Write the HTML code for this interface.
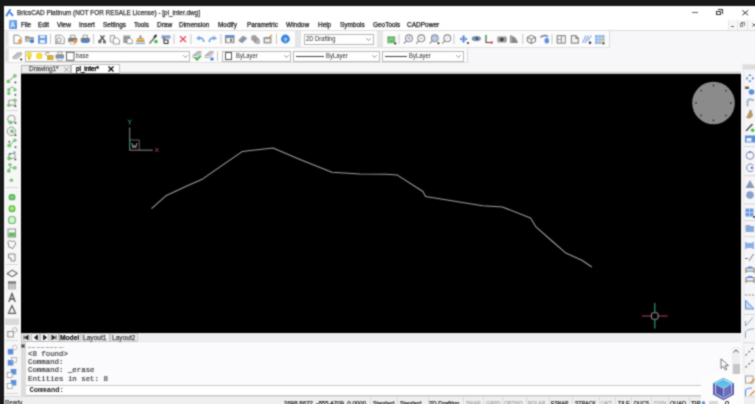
<!DOCTYPE html>
<html><head><meta charset="utf-8">
<style>
*{margin:0;padding:0;box-sizing:border-box}
html,body{width:755px;height:404px;overflow:hidden;background:#181818;font-family:"Liberation Sans",sans-serif;color:#222;position:relative}
.a{position:absolute}
.t{position:absolute;font-size:7px;line-height:8px;white-space:nowrap;letter-spacing:0;color:#1a1a1a;transform-origin:0 0;-webkit-text-stroke:0.25px currentColor}
.mono{font-family:"Liberation Mono",monospace}
svg{position:absolute;overflow:visible}
#root{position:absolute;left:0;top:0;width:755px;height:404px;overflow:hidden;background:#181818;filter:url(#bl)}
</style></head><body><svg width="0" height="0" style="position:absolute"><filter id="bl" x="0" y="0" width="100%" height="100%" color-interpolation-filters="sRGB"><feConvolveMatrix order="3" kernelMatrix="1 2 1 2 8 2 1 2 1" edgeMode="duplicate"/></filter></svg><div id="root">
<!-- window background -->
<div class="a" style="left:4px;top:6px;width:751px;height:398px;background:#f7f6f9"></div>
<!-- title + menu white -->
<div class="a" style="left:4px;top:6px;width:751px;height:24px;background:#fff"></div>

<!-- toolbar rows -->
<div class="a" style="left:4px;top:30px;width:751px;height:1px;background:#dedede"></div>

<!-- drawing area -->
<div class="a" style="left:21px;top:71px;width:720px;height:4px;background:linear-gradient(#f8f8f8,#9a9a9a)"></div>
<div class="a" style="left:21px;top:74px;width:720px;height:259px;background:#000"></div>
<!-- tab row -->
<div class="a" style="left:20.5px;top:64.5px;width:50px;height:9px;background:#ececec;border:1px solid #b8b8b8;border-bottom:1px solid #888"></div>
<div class="a" style="left:70.5px;top:64px;width:49.5px;height:9.5px;background:#fff;border:1px solid #c0c0c0;border-bottom:1px solid #777"></div>

<!-- left toolbar -->
<div class="a" style="left:4px;top:74px;width:17px;height:322px;background:#f7f7f8"></div>

<!-- drawing area -->

<!-- right toolbar -->
<div class="a" style="left:741px;top:63px;width:14px;height:341px;background:#f6f6f8"></div>

<!-- layout tab row -->
<div class="a" style="left:21px;top:333px;width:720px;height:9px;background:#efeff1;border-bottom:1px solid #e8e8e8"></div>

<!-- command panel -->
<div class="a" style="left:21px;top:342px;width:720px;height:54px;background:#fbfafc"></div>
<div class="a" style="left:21px;top:342px;width:5px;height:54px;background:#dcdcdc"></div>
<div class="a" style="left:26px;top:385px;width:715px;height:11px;background:#fff;border-top:1px solid #c9c9c9;border-bottom:1px solid #c9c9c9"></div>

<!-- status bar -->
<div class="a" style="left:4px;top:396px;width:751px;height:8px;background:#efefef;border-top:1px solid #dadada"></div>


<!-- ===== title ===== -->
<svg style="left:0;top:0" width="20" height="20" viewBox="0 0 20 20"><path d="M6.6 15.6 L10 9.9" stroke="#3f7fe0" stroke-width="1.9" stroke-linecap="round"/><path d="M10.2 12.6 L12.6 15.4" stroke="#3f7fe0" stroke-width="1.8" stroke-linecap="round"/></svg>
<div class="t" style="left:16.5px;top:9px;color:#333;transform:scaleX(0.912)">BricsCAD Platinum (NOT FOR RESALE License) - [pl_inter.dwg]</div>
<!-- window controls -->
<div class="a" style="left:692px;top:12px;width:5.6px;height:1px;background:#666"></div>
<div class="a" style="left:716.3px;top:10.6px;width:5px;height:4.5px;border:1px solid #333"></div>
<div class="a" style="left:717.6px;top:9.3px;width:5px;height:4.5px;border-top:1px solid #333;border-right:1px solid #333"></div>
<svg style="left:741.5px;top:9.5px" width="6.5" height="5.5" viewBox="0 0 6.5 5.5"><path d="M0.3 0.3 L6.2 5.2 M6.2 0.3 L0.3 5.2" stroke="#333" stroke-width="1"/></svg>
<!-- ===== menu ===== -->
<div class="a" style="left:9px;top:20px;width:7.6px;height:8.8px;background:linear-gradient(135deg,#8ab8f0,#4a86dc);border-radius:1px"></div>
<svg style="left:9px;top:20px" width="8" height="9" viewBox="0 0 8 9"><path d="M2 7.5 L3.8 2 L5.6 7.5 M2.7 5.6 H4.9" stroke="#fff" stroke-width="0.9" fill="none"/></svg>
<div class="t" style="left:20.7px;top:21px;transform:scaleX(0.895)">File</div>
<div class="t" style="left:38px;top:21px;transform:scaleX(0.902)">Edit</div>
<div class="t" style="left:57px;top:21px;transform:scaleX(0.921)">View</div>
<div class="t" style="left:78.6px;top:21px;transform:scaleX(0.897)">Insert</div>
<div class="t" style="left:103px;top:21px;transform:scaleX(0.905)">Settings</div>
<div class="t" style="left:133.8px;top:21px;transform:scaleX(0.908)">Tools</div>
<div class="t" style="left:156.7px;top:21px;transform:scaleX(0.926)">Draw</div>
<div class="t" style="left:179px;top:21px;transform:scaleX(0.918)">Dimension</div>
<div class="t" style="left:218px;top:21px;transform:scaleX(0.913)">Modify</div>
<div class="t" style="left:246.6px;top:21px;transform:scaleX(0.911)">Parametric</div>
<div class="t" style="left:286.4px;top:21px;transform:scaleX(0.928)">Window</div>
<div class="t" style="left:318px;top:21px;transform:scaleX(0.916)">Help</div>
<div class="t" style="left:340px;top:21px;transform:scaleX(0.922)">Symbols</div>
<div class="t" style="left:372.5px;top:21px;transform:scaleX(0.919)">GeoTools</div>
<div class="t" style="left:407.4px;top:21px;transform:scaleX(0.931)">CADPower</div>
<!-- mdi buttons -->
<div class="a" style="left:728px;top:19.5px;width:27px;height:10px;background:#f7f7f7;border-left:1px solid #e6e6e6"></div>
<div class="a" style="left:736.5px;top:19.5px;width:1px;height:10px;background:#e6e6e6"></div>
<div class="a" style="left:747px;top:19.5px;width:1px;height:10px;background:#e6e6e6"></div>
<div class="a" style="left:730.5px;top:26.2px;width:3px;height:1px;background:#666"></div>
<div class="a" style="left:739.8px;top:23px;width:3.5px;height:3.5px;border:0.8px solid #888"></div>
<div class="a" style="left:741px;top:22px;width:3.5px;height:3.5px;border-top:0.8px solid #888;border-right:0.8px solid #888"></div>
<svg style="left:751.5px;top:22.5px" width="4" height="4" viewBox="0 0 4 4"><path d="M0.3 0.3 L3.7 3.7 M3.7 0.3 L0.3 3.7" stroke="#666" stroke-width="0.9"/></svg>
<!-- ===== toolbar row 1 ===== -->
<div class="a" style="left:5px;top:31px;width:290px;height:17px;background:#fcfcfd;border-bottom:1px solid #e2e2e2"></div>
<div class="a" style="left:295px;top:31px;width:6px;height:17px;background:#e6e6e8"></div>
<div class="a" style="left:301px;top:31px;width:76px;height:17px;background:#fcfcfd;border-bottom:1px solid #e2e2e2"></div>
<div class="a" style="left:377px;top:31px;width:6px;height:17px;background:#e6e6e8"></div>
<div class="a" style="left:383px;top:31px;width:227px;height:17px;background:#fcfcfd;border-right:1px solid #dcdcdc;border-bottom:1px solid #e2e2e2"></div>
<div class="a" style="left:5px;top:31px;width:4px;height:17px;background:#ececee"></div>
<!-- workspace combo -->
<div class="a" style="left:303.5px;top:33.5px;width:70px;height:11px;background:#fff;border:1px solid #b9b9b9"></div>
<div class="t" style="left:306px;top:35px;font-size:6.5px;color:#333;transform:scaleX(0.900);-webkit-text-stroke:0;color:#2a2a2a">2D Drafting</div>
<svg style="left:366px;top:38px" width="5" height="3" viewBox="0 0 5 3"><path d="M0.3 0.3 L2.5 2.5 L4.7 0.3" stroke="#777" stroke-width="0.8" fill="none"/></svg>

<!-- ===== toolbar row 2 ===== -->
<div class="a" style="left:5px;top:49px;width:463px;height:14px;background:#fcfcfd;border-right:1px solid #dadada;border-bottom:1px solid #e2e2e2"></div>
<div class="a" style="left:5px;top:48px;width:4px;height:15px;background:#e6e6e6"></div>
<!-- layer combo -->
<div class="a" style="left:24.5px;top:50.5px;width:165px;height:11px;background:#fff;border:1px solid #b9b9b9"></div>
<div class="t" style="left:76px;top:52px;font-size:6.5px;color:#333;transform:scaleX(0.915);-webkit-text-stroke:0;color:#2a2a2a">base</div>
<svg style="left:183px;top:55px" width="5" height="3" viewBox="0 0 5 3"><path d="M0.3 0.3 L2.5 2.5 L4.7 0.3" stroke="#777" stroke-width="0.8" fill="none"/></svg>
<!-- color combo -->
<div class="a" style="left:222px;top:50.5px;width:69px;height:11px;background:#fff;border:1px solid #b9b9b9"></div>
<div class="a" style="left:225px;top:52px;width:7px;height:8px;background:#fff;border:1px solid #555"></div>
<div class="t" style="left:236px;top:52px;font-size:6.5px;color:#333;transform:scaleX(0.912);-webkit-text-stroke:0;color:#2a2a2a">ByLayer</div>
<svg style="left:284px;top:55px" width="5" height="3" viewBox="0 0 5 3"><path d="M0.3 0.3 L2.5 2.5 L4.7 0.3" stroke="#777" stroke-width="0.8" fill="none"/></svg>
<!-- linetype combo -->
<div class="a" style="left:292.5px;top:50.5px;width:87px;height:11px;background:#fff;border:1px solid #b9b9b9"></div>
<div class="a" style="left:296px;top:55.5px;width:28px;height:1px;background:#444"></div>
<div class="t" style="left:326px;top:52px;font-size:6.5px;color:#333;transform:scaleX(0.912);-webkit-text-stroke:0;color:#2a2a2a">ByLayer</div>
<svg style="left:372px;top:55px" width="5" height="3" viewBox="0 0 5 3"><path d="M0.3 0.3 L2.5 2.5 L4.7 0.3" stroke="#777" stroke-width="0.8" fill="none"/></svg>
<!-- lineweight combo -->
<div class="a" style="left:381.5px;top:50.5px;width:82px;height:11px;background:#fff;border:1px solid #b9b9b9"></div>
<div class="a" style="left:385px;top:55.5px;width:22px;height:1px;background:#444"></div>
<div class="t" style="left:409px;top:52px;font-size:6.5px;color:#333;transform:scaleX(0.912);-webkit-text-stroke:0;color:#2a2a2a">ByLayer</div>
<svg style="left:456px;top:55px" width="5" height="3" viewBox="0 0 5 3"><path d="M0.3 0.3 L2.5 2.5 L4.7 0.3" stroke="#777" stroke-width="0.8" fill="none"/></svg>

<!-- ===== document tabs ===== -->
<div class="t" style="left:28.5px;top:65px;color:#555;transform:scaleX(0.916)">Drawing1*</div>
<svg style="left:64.2px;top:66.5px" width="5" height="5" viewBox="0 0 5 5"><path d="M0.3 0.3 L4.7 4.7 M4.7 0.3 L0.3 4.7" stroke="#888" stroke-width="0.8"/></svg>
<div class="t" style="left:76px;top:65px;color:#111;text-shadow:0 0 0.3px #000;transform:scaleX(0.895)">pl_inter*</div>
<svg style="left:107.8px;top:66px" width="6" height="6" viewBox="0 0 6 6"><path d="M0.5 0.5 L5.5 5.5 M5.5 0.5 L0.5 5.5" stroke="#111" stroke-width="1.4"/></svg>

<!-- ===== layout tabs ===== -->
<div class="a" style="left:21px;top:333px;width:9px;height:9px;background:#f4f4f4;border:1px solid #bdbdbd"></div>
<div class="a" style="left:31px;top:333px;width:9px;height:9px;background:#f4f4f4;border:1px solid #bdbdbd"></div>
<div class="a" style="left:40px;top:333px;width:9px;height:9px;background:#f4f4f4;border:1px solid #bdbdbd"></div>
<div class="a" style="left:49.5px;top:333px;width:9px;height:9px;background:#f4f4f4;border:1px solid #bdbdbd"></div>
<svg style="left:21px;top:333px" width="40" height="9" viewBox="0 0 40 9">
 <path d="M3 2.2 V6.8 M7 2.2 L3.8 4.5 L7 6.8Z M16.5 2.2 L13.3 4.5 L16.5 6.8Z M22.5 2.2 L25.7 4.5 L22.5 6.8Z M31 2.2 L34.2 4.5 L31 6.8Z M35 2.2 V6.8" stroke="#222" stroke-width="0.9" fill="#222"/>
</svg>
<div class="a" style="left:58.5px;top:333px;width:22px;height:9px;background:#fff;border:1px solid #bdbdbd"></div>
<div class="t" style="left:60px;top:334px;font-weight:bold;color:#111;transform:scaleX(0.951)">Model</div>
<div class="a" style="left:81.5px;top:333px;width:28px;height:9px;background:#f0f0f0;border:1px solid #c4c4c4"></div>
<div class="t" style="left:83px;top:334px;color:#444;transform:scaleX(0.944)">Layout1</div>
<div class="a" style="left:110px;top:333px;width:28px;height:9px;background:#f0f0f0;border:1px solid #c4c4c4"></div>
<div class="t" style="left:112px;top:334px;color:#444;transform:scaleX(0.944)">Layout2</div>

<!-- ===== command panel text ===== -->
<svg style="left:21px;top:343.5px" width="4" height="4" viewBox="0 0 4 4"><rect x="0.3" y="0.3" width="3.4" height="3.4" fill="#777"/><path d="M0.5 0.5 L3.5 3.5 M3.5 0.5 L0.5 3.5" stroke="#333" stroke-width="0.8"/></svg>
<div class="a" style="left:28px;top:347px;width:36px;height:1px;background:repeating-linear-gradient(90deg,#aaa 0 3px,#eee 3px 4.4px)"></div>
<div class="mono a" style="left:28px;top:349.9px;font-size:7.4px;line-height:8.23px;color:#404040;white-space:pre;-webkit-text-stroke:0.2px #404040">&lt;8 found&gt;
Command:
Command: _erase
Entities in set: 8</div>
<div class="mono a" style="left:29.4px;top:386.3px;font-size:7.2px;line-height:8px;color:#222;font-weight:bold;transform:scaleY(1.12);transform-origin:0 50%">Command:</div>
<!-- scrollbar -->
<div class="a" style="left:732px;top:347px;width:8px;height:35px;background:#efefef"></div>
<svg style="left:733px;top:349px" width="6" height="4" viewBox="0 0 6 4"><path d="M0.5 3.5 L3 1 L5.5 3.5" stroke="#555" stroke-width="1" fill="none"/></svg>
<div class="a" style="left:732.5px;top:363.5px;width:7px;height:10px;background:#c6c6c6"></div>
<svg style="left:733px;top:376px" width="6" height="4" viewBox="0 0 6 4"><path d="M0.5 0.5 L3 3 L5.5 0.5" stroke="#bbb" stroke-width="1" fill="none"/></svg>

<!-- status dividers -->
<div class="a" style="left:369.5px;top:397px;width:1px;height:7px;background:#dadada"></div><div class="a" style="left:397px;top:397px;width:1px;height:7px;background:#dadada"></div><div class="a" style="left:427.5px;top:397px;width:1px;height:7px;background:#dadada"></div><div class="a" style="left:463px;top:397px;width:1px;height:7px;background:#dadada"></div><div class="a" style="left:483px;top:397px;width:1px;height:7px;background:#dadada"></div><div class="a" style="left:502px;top:397px;width:1px;height:7px;background:#dadada"></div><div class="a" style="left:525.5px;top:397px;width:1px;height:7px;background:#dadada"></div><div class="a" style="left:548.5px;top:397px;width:1px;height:7px;background:#dadada"></div><div class="a" style="left:572px;top:397px;width:1px;height:7px;background:#dadada"></div><div class="a" style="left:598.5px;top:397px;width:1px;height:7px;background:#dadada"></div><div class="a" style="left:614.8px;top:397px;width:1px;height:7px;background:#dadada"></div><div class="a" style="left:631px;top:397px;width:1px;height:7px;background:#dadada"></div><div class="a" style="left:651.3px;top:397px;width:1px;height:7px;background:#dadada"></div><div class="a" style="left:668px;top:397px;width:1px;height:7px;background:#dadada"></div><div class="a" style="left:688.7px;top:397px;width:1px;height:7px;background:#dadada"></div>
<!-- ===== status bar text ===== -->
<div class="t" style="left:4.5px;top:399px;color:#444;font-size:6.5px;transform:scaleX(0.920)">Ready</div>
<div class="t" style="left:284px;top:398.5px;font-size:6.2px;color:#333;transform:scaleX(0.990)">2698.8672, -855.4709, 0.0000</div>
<div class="t" style="left:373px;top:398.5px;font-size:6.2px;color:#333;transform:scaleX(0.853)">Standard</div>
<div class="t" style="left:399.7px;top:398.5px;font-size:6.2px;color:#333;transform:scaleX(0.853)">Standard</div>
<div class="t" style="left:429.4px;top:398.5px;font-size:6.2px;color:#333;transform:scaleX(0.972)">2D Drafting</div>
<div class="t" style="left:466px;top:398.5px;font-size:6.2px;color:#aaa;transform:scaleX(0.867)">SNAP</div>
<div class="t" style="left:485.8px;top:398.5px;font-size:6.2px;color:#aaa;transform:scaleX(0.938)">GRID</div>
<div class="t" style="left:504.4px;top:398.5px;font-size:6.2px;color:#aaa;transform:scaleX(0.836)">ORTHO</div>
<div class="t" style="left:528px;top:398.5px;font-size:6.2px;color:#aaa;transform:scaleX(0.831)">POLAR</div>
<div class="t" style="left:550.7px;top:398.5px;font-size:6.2px;color:#333;transform:scaleX(0.826)">ESNAP</div>
<div class="t" style="left:575px;top:398.5px;font-size:6.2px;color:#333;transform:scaleX(0.838)">STRACK</div>
<div class="t" style="left:601px;top:398.5px;font-size:6.2px;color:#aaa;transform:scaleX(0.871)">LWT</div>
<div class="t" style="left:618px;top:398.5px;font-size:6.2px;color:#333;transform:scaleX(0.896)">TILE</div>
<div class="t" style="left:634px;top:398.5px;font-size:6.2px;color:#333;transform:scaleX(0.856)">DUCS</div>
<div class="t" style="left:653.5px;top:398.5px;font-size:6.2px;color:#aaa;transform:scaleX(0.933)">DYN</div>
<div class="t" style="left:670px;top:398.5px;font-size:6.2px;color:#333;transform:scaleX(0.894)">QUAD</div>
<div class="t" style="left:691.4px;top:398.5px;font-size:6.2px;color:#333;transform:scaleX(1.017)">TIPS</div>


<!-- ===== drawing content ===== -->
<svg style="left:0;top:0" width="755" height="404" viewBox="0 0 755 404">
 <polyline points="151.5,208.7 166.4,195.4 187.9,185.5 202.8,178.9 216,169.6 242.5,151.4 273,148 298.8,159 331.9,172.3 360,173.9 386.5,174.2 397,174.9 422.9,191.5 425.6,196.4 482.5,205.7 502.4,207 530.5,218 536.2,227.2 552,241 565.3,252.7 581.9,260.3 591.8,267" fill="none" stroke="#a0a0a0" stroke-width="1.05" stroke-linejoin="round"/>
 <!-- UCS -->
 <path d="M129.7 127.5 V150.2 H152.8" stroke="#8c8c8c" stroke-width="1" fill="none"/>
 <path d="M129.5 140 H139.2 V150.2" stroke="#7a7a7a" stroke-width="0.8" fill="none"/>
 <path d="M129.6 140 V150.2" stroke="#2f8f6f" stroke-width="1.1"/>
 <path d="M130 150.2 H139" stroke="#8a3a4a" stroke-width="1"/>
 <path d="M131.8 143 L133.2 148 L134.4 145 L135.6 148 L137 143" stroke="#c8c8c8" stroke-width="0.8" fill="none"/>
 <path d="M127.8 119.6 L129.7 122 L131.6 119.6 M129.7 122 V124.5" stroke="#2a9a7a" stroke-width="0.9" fill="none"/>
 <path d="M155 148 L158.5 152 M158.5 148 L155 152" stroke="#a04058" stroke-width="0.9" fill="none"/>
 <!-- crosshair -->
 <path d="M654.8 303 V312.5 M654.8 319.5 V328.4" stroke="#2a9a72" stroke-width="1.2"/>
 <path d="M641.8 316 H651.5 M658 316 H667.7" stroke="#a8475e" stroke-width="1.1"/>
 <rect x="651.5" y="312.7" width="6.6" height="6.6" rx="1.8" fill="none" stroke="#8a8a8a" stroke-width="1.1"/>
 <!-- nav circle -->
 <circle cx="713.5" cy="103" r="21.3" fill="#8b8b8b"/>
 <g fill="#3a3a3a">
  <circle cx="713.5" cy="85.5" r="0.9"/><circle cx="713.5" cy="120.5" r="0.9"/>
  <circle cx="696" cy="103" r="0.9"/><circle cx="731" cy="103" r="0.9"/>
  <circle cx="701.1" cy="90.6" r="0.9"/><circle cx="725.9" cy="90.6" r="0.9"/>
  <circle cx="701.1" cy="115.4" r="0.9"/><circle cx="725.9" cy="115.4" r="0.9"/>
 </g>
</svg>


<!-- ===== toolbar icons row 1 & 2 ===== -->
<svg style="left:0;top:0" width="755" height="404" viewBox="0 0 755 404">
 <!-- grips -->
 <g fill="#c4c4c4">
  <rect x="6" y="33" width="1" height="1"/><rect x="6" y="35" width="1" height="1"/><rect x="6" y="37" width="1" height="1"/><rect x="6" y="39" width="1" height="1"/><rect x="6" y="41" width="1" height="1"/><rect x="6" y="43" width="1" height="1"/>
  <rect x="6" y="51" width="1" height="1"/><rect x="6" y="53" width="1" height="1"/><rect x="6" y="55" width="1" height="1"/><rect x="6" y="57" width="1" height="1"/><rect x="6" y="59" width="1" height="1"/>
 </g>
 <!-- separators -->
 <g fill="#c8c8c8">
  <rect x="50" y="34" width="1" height="10"/><rect x="93" y="34" width="1" height="10"/><rect x="173.5" y="34" width="1" height="10"/>
  <rect x="190.5" y="34" width="1" height="10"/><rect x="220.5" y="34" width="1" height="10"/><rect x="276" y="34" width="1" height="10"/>
  <rect x="398.5" y="34" width="1" height="10"/><rect x="453.5" y="34" width="1" height="10"/><rect x="522.3" y="34" width="1" height="10"/><rect x="551.5" y="34" width="1" height="10"/>
  <rect x="217" y="51" width="1" height="10"/>
 </g>
 <!-- new -->
 <path d="M13.9 35.2 H18.5 L21 37.7 V43.3 H13.9 Z" fill="#fff" stroke="#8a8a8a" stroke-width="1"/>
 <circle cx="20" cy="41" r="2.1" fill="#f0a040"/>
 <!-- open -->
 <path d="M25 36 H28.5 L29.5 37 H34 V41.8 H25 Z" fill="#9a9a9a"/>
 <path d="M26 38.5 H34.5 L33 41.8 H25 Z" fill="#bdbdbd"/>
 <circle cx="32" cy="41.3" r="2" fill="#3f7fd0"/>
 <!-- save -->
 <rect x="38" y="35" width="9" height="8.7" rx="0.8" fill="#6d9be0"/>
 <rect x="40" y="35.6" width="5" height="2.4" fill="#e8f0fb"/>
 <rect x="40" y="40" width="5" height="3" fill="#e8f0fb"/>
 <!-- print preview -->
 <path d="M55.8 35.3 H61.5 L64.3 38 V43.6 H55.8 Z" fill="#fafafa" stroke="#8f8f8f" stroke-width="0.9"/>
 <circle cx="59" cy="40" r="2.2" fill="none" stroke="#888" stroke-width="0.9"/>
 <path d="M57.4 41.6 L55.4 43.6" stroke="#777" stroke-width="1"/>
 <!-- print orange -->
 <path d="M70.5 35.2 H75 V38 H70.5 Z" fill="#fff" stroke="#888" stroke-width="0.8"/>
 <path d="M68.2 38 H77.2 V42 H68.2 Z" fill="#7c7c7c"/>
 <rect x="70" y="41.5" width="5.5" height="2.5" fill="#fff" stroke="#999" stroke-width="0.6"/>
 <circle cx="75" cy="41.5" r="2" fill="#f09a3e"/>
 <!-- print blue -->
 <path d="M83 35.2 H87.5 V38 H83 Z" fill="#fff" stroke="#888" stroke-width="0.8"/>
 <path d="M80.8 38 H89.8 V42 H80.8 Z" fill="#7c7c7c"/>
 <ellipse cx="85.3" cy="41.5" rx="4" ry="1.6" fill="#4a86d8"/>
 <!-- cut -->
 <path d="M104.5 35.5 L99.5 41 M100.5 35.5 L105 41.5" stroke="#555" stroke-width="1.3"/>
 <circle cx="99.8" cy="41.6" r="1.8" fill="#666"/><circle cx="104.5" cy="42" r="1.6" fill="#666"/>
 <!-- copy -->
 <path d="M110.3 35.5 H114.5 V42 H110.3 Z" fill="#fff" stroke="#8f8f8f" stroke-width="0.9"/>
 <path d="M113.3 38 H117.5 L119.5 40 V44 H113.3 Z" fill="#fff" stroke="#8f8f8f" stroke-width="0.9"/>
 <!-- paste -->
 <rect x="123.3" y="35.5" width="7" height="7.5" fill="#9a9a9a"/>
 <path d="M127 38.5 H130.5 L132.3 40.3 V43.6 H127 Z" fill="#fff" stroke="#8a8a8a" stroke-width="0.9"/>
 <!-- match prop brush -->
 <path d="M139.5 35.5 H141.5 V38 H139.5 Z" fill="#888"/>
 <path d="M137.5 38 H143.5 L145 42 H136 Z" fill="#c9a24a"/>
 <path d="M138 39.5 H143.5" stroke="#f0d090" stroke-width="0.8"/>
 <path d="M135.6 43.3 H145" stroke="#5a8ad0" stroke-width="1"/>
 <!-- eyedropper -->
 <path d="M149.5 43.5 L155.5 36.5" stroke="#777" stroke-width="1.6"/>
 <path d="M154 37.5 L156.5 35" stroke="#333" stroke-width="2.2"/>
 <circle cx="156" cy="41.6" r="1.8" fill="#3cc03c"/>
 <!-- select similar -->
 <rect x="161.5" y="35.3" width="9" height="3.2" fill="#8aa0c8"/>
 <path d="M164 37.5 V43.5 M164 40 H168 V43.5 H164" stroke="#333" stroke-width="1.1" fill="none"/>
 <!-- delete X -->
 <path d="M180 36.3 L186 42 M186 36.3 L180 42" stroke="#e2505c" stroke-width="1.4"/>
 <!-- undo / redo -->
 <path d="M203.8 42 C203.5 38.5 201 37.5 198.5 38.2" stroke="#79a6e6" stroke-width="1.8" fill="none"/>
 <path d="M196 38.5 L199.5 35.6 L199.8 40.6 Z" fill="#79a6e6"/>
 <path d="M209.2 42 C209.5 38.5 212 37.5 214.5 38.2" stroke="#79a6e6" stroke-width="1.8" fill="none"/>
 <path d="M217 38.5 L213.5 35.6 L213.2 40.6 Z" fill="#79a6e6"/>
 <!-- properties -->
 <rect x="225" y="35.2" width="9.4" height="8" fill="#8f8f8f"/>
 <rect x="225" y="35.2" width="9.4" height="2" fill="#5d8fd8"/>
 <rect x="226.5" y="38" width="6.4" height="4.3" fill="#f4f4f4"/>
 <rect x="230" y="38.7" width="2" height="3" fill="#777"/>
 <!-- eraser -->
 <path d="M238 40.5 L243 35.5 L247.3 38.3 L242.3 43.3 Z" fill="#9c9c9c"/>
 <path d="M240.2 42.3 L245.2 37.3" stroke="#5a8ad8" stroke-width="1"/>
 <!-- stack -->
 <circle cx="254" cy="38" r="3" fill="#a2a2a2"/><circle cx="256.5" cy="40.5" r="3" fill="#9a9a9a"/><circle cx="258" cy="42" r="2.3" fill="#b4b4b4"/>
 <!-- note -->
 <rect x="263.5" y="37" width="8" height="6.5" fill="#9a9a9a"/>
 <rect x="265" y="39" width="5" height="3" fill="#eee"/>
 <path d="M268 38.5 L272 35" stroke="#d89040" stroke-width="1.4"/>
 <!-- help -->
 <circle cx="285.4" cy="39" r="4.4" fill="#3a86e0"/>
 <text x="285.4" y="41.6" font-size="6" font-family="Liberation Sans" font-weight="bold" fill="#fff" text-anchor="middle">?</text>
 <!-- green view -->
 <rect x="387" y="36" width="8.5" height="7.5" fill="#bbb"/>
 <rect x="388" y="37" width="6.5" height="5.5" fill="#52c052"/>
 <path d="M389 41 L391 38.5 L393 40" stroke="#c8f0c8" stroke-width="0.8" fill="none"/>
 <circle cx="395.3" cy="43.5" r="1.1" fill="#222"/>
 <!-- zooms -->
 <g fill="none" stroke="#8a8a8a" stroke-width="1.1">
  <circle cx="409" cy="38.3" r="3.4"/><path d="M406.5 40.8 L403.8 43.5"/>
  <circle cx="421.3" cy="38.3" r="3.4"/><path d="M418.8 40.8 L416.1 43.5"/>
  <circle cx="434.8" cy="38.3" r="3.4"/><path d="M432.3 40.8 L429.6 43.5"/>
  <circle cx="447.3" cy="38.3" r="3.4"/><path d="M444.8 40.8 L442.1 43.5"/>
 </g>
 <circle cx="409" cy="38.3" r="2.3" fill="#dde6f5"/><path d="M409.6 37 L408.4 38.3 L409.6 39.6" stroke="#4a6aa0" stroke-width="0.8" fill="none"/>
 <rect x="420" y="37.8" width="2.6" height="1" fill="#999"/>
 <circle cx="434.8" cy="38.3" r="2.5" fill="#8fb0e0"/><path d="M434.8 36 V40.6 M432.5 38.3 H437.1" stroke="#e8f0ff" stroke-width="0.7"/>
 <circle cx="438.5" cy="43.3" r="1" fill="#222"/>
 <path d="M446 39.5 L448.5 37" stroke="#aaa" stroke-width="0.8"/>
 <!-- pan -->
 <g fill="#4a7fd0">
  <path d="M463.6 35 L461.8 37.2 H465.4 Z"/><path d="M463.6 43 L461.8 40.8 H465.4 Z"/>
  <path d="M459.6 39 L461.8 37.2 V40.8 Z"/><path d="M467.6 39 L465.4 37.2 V40.8 Z"/>
  <rect x="463" y="37" width="1.2" height="4"/><rect x="461.6" y="38.4" width="4" height="1.2"/>
 </g>
 <circle cx="468" cy="43" r="1" fill="#222"/>
 <!-- eye -->
 <ellipse cx="476.3" cy="38.6" rx="4.6" ry="2.6" fill="#7d8fa8"/>
 <circle cx="477" cy="38.6" r="1.4" fill="#3e506a"/>
 <!-- ucs -->
 <path d="M486 36 V42.5 H492" stroke="#444" stroke-width="1.1" fill="none"/>
 <rect x="485" y="35" width="2" height="2" fill="#4ac04a"/>
 <circle cx="491.8" cy="42.5" r="1.2" fill="#e04050"/>
 <!-- camera -->
 <rect x="497.3" y="36.5" width="9.4" height="6" rx="1" fill="#9a9a9a"/>
 <circle cx="501.8" cy="39.5" r="1.9" fill="#444"/>
 <!-- render -->
 <path d="M510 35.3 C514 36 517.5 39 517.8 43 H510 Z" fill="#888"/>
 <path d="M511.5 36.5 V42.5" stroke="#ccc" stroke-width="0.6"/>
 <!-- box -->
 <path d="M527.3 37.3 L531.3 35.3 L535.5 37.3 V41.5 L531.3 43.5 L527.3 41.5 Z M527.3 37.3 L531.3 39.3 L535.5 37.3 M531.3 39.3 V43.5" stroke="#666" stroke-width="0.9" fill="#fafafa"/>
 <!-- blue 3d -->
 <path d="M540.5 37.5 C542 35 546 35 548 36.8" stroke="#7d8fa8" stroke-width="1.8" fill="none"/>
 <rect x="544.5" y="38" width="4.5" height="5.5" rx="2" fill="#5a92e0"/>
 <!-- viewports -->
 <rect x="556.6" y="35" width="9.3" height="8.8" rx="0.7" fill="#8c8c8c"/>
 <rect x="557.8" y="36.2" width="3" height="3" fill="#f4f4f4"/><rect x="557.8" y="40" width="3" height="2.6" fill="#f4f4f4"/><rect x="561.8" y="36.2" width="3" height="6.4" fill="#f4f4f4"/>
 <!-- page -->
 <path d="M570.8 35 H576 L579 38 V43.8 H570.8 Z" fill="#8c8c8c"/>
 <path d="M572 36.2 H575.3 V39 H577.8 V42.6 H572 Z" fill="#f4f4f4"/>
 <!-- blue pattern -->
 <path d="M582.5 43 L586 35.5 M585 43 L588.5 35.5 M587.5 41 L591.5 35.5" stroke="#7fa8e0" stroke-width="1.1"/>
 <circle cx="590" cy="42.8" r="1.3" fill="#333"/>
 <!-- blue grid -->
 <rect x="595" y="35" width="9.5" height="9" fill="#8ab2ea"/>
 <path d="M595 38 H604.5 M595 41 H604.5 M598.2 35 V44 M601.3 35 V44" stroke="#dbe7f8" stroke-width="0.7"/>
 <circle cx="602" cy="41.5" r="1.8" fill="#f0d070"/>
 <circle cx="603.5" cy="43.5" r="1" fill="#333"/>

 <!-- row 2 -->
 <path d="M13 57 L17.5 52.8 H22 L17.5 57 Z" fill="#c0c0c0" stroke="#999" stroke-width="0.7"/>
 <path d="M13 57 V58.5 H17.5 L22 54.3" stroke="#999" stroke-width="0.8" fill="none"/>
 <circle cx="21.2" cy="59.6" r="1" fill="#222"/>
 <!-- bulb -->
 <circle cx="29.2" cy="54.8" r="2.9" fill="#f4e040"/>
 <rect x="28" y="57" width="2.4" height="2.7" fill="#d8c040"/>
 <!-- sun -->
 <circle cx="39.3" cy="56" r="3.3" fill="#f2dc40"/>
 <!-- lock -->
 <path d="M45.8 55.5 V53.6 C45.8 51.8 49.2 51.8 49.2 53.6" stroke="#777" stroke-width="0.9" fill="none"/>
 <rect x="47" y="55" width="6.6" height="5" fill="#d2ad40"/>
 <!-- printer -->
 <path d="M57.8 52 H61.8 V54.5 H57.8 Z" fill="#fff" stroke="#888" stroke-width="0.7"/>
 <path d="M55.5 54.5 H64 V58.5 H55.5 Z" fill="#8c8c8c"/>
 <ellipse cx="59.8" cy="57" rx="3.8" ry="1" fill="#6a9ad8"/>
 <rect x="57.5" y="58.3" width="4.5" height="2.2" fill="#fff" stroke="#999" stroke-width="0.6"/>
 <!-- color square -->
 <rect x="66.5" y="52.3" width="7.5" height="8" fill="#fff" stroke="#555" stroke-width="0.9"/>
 <!-- layer check -->
 <path d="M193 55.5 L197.5 51.6 H201.5 L197 55.5 Z" fill="#c0c0c0" stroke="#999" stroke-width="0.7"/>
 <path d="M193 55.5 V57.5 H197 L201.5 53.5" stroke="#999" stroke-width="0.8" fill="none"/>
 <path d="M195 57.5 L197 59.8 L201 55.8" stroke="#30b030" stroke-width="1.6" fill="none"/>
 <path d="M205.2 55.5 L209.7 51.6 H213.7 L209.2 55.5 Z" fill="#c0c0c0" stroke="#999" stroke-width="0.7"/>
 <path d="M205.2 55.5 V57.5 H209.2 L213.7 53.5" stroke="#999" stroke-width="0.8" fill="none"/>
 <circle cx="212" cy="59" r="1.8" fill="#4a86d8"/>
</svg>


<!-- ===== left toolbar icons ===== -->
<svg style="left:0;top:0" width="755" height="404" viewBox="0 0 755 404">
 <g fill="#d0d0d0">
  <rect x="6" y="110" width="12" height="0.8"/><rect x="6" y="187" width="12" height="0.8"/><rect x="6" y="264" width="12" height="0.8"/><rect x="6" y="340" width="12" height="0.8"/>
 </g>
 <rect x="5" y="318.5" width="14" height="6.5" fill="#dadada"/>
 <g fill="#3a3a3a"><circle cx="15.4" cy="82.4" r="0.9"/><circle cx="15.4" cy="94.8" r="0.9"/><circle cx="15.4" cy="106.2" r="0.9"/><circle cx="15.5" cy="122.9" r="0.9"/><circle cx="15.5" cy="135.2" r="0.9"/><circle cx="15.5" cy="147.1" r="0.9"/><circle cx="15.4" cy="159.4" r="0.9"/></g>
 <g stroke="#8a8a8a" stroke-width="0.9" fill="none">
  <path d="M8.4 81.4 L14.9 75.8"/>
  <path d="M8.8 91.8 C8.8 86 14.9 86 14.9 89.8"/>
  <path d="M8.8 105.2 V100.2 H15 V105.2 H8.8"/>
  <circle cx="11.4" cy="119" r="3.8"/>
  <circle cx="11.4" cy="131.3" r="4.2"/>
  <path d="M9.3 145.6 L14.9 140.2"/>
  <ellipse cx="12" cy="156" rx="3.5" ry="2.5"/>
  <path d="M8.8 170.8 C10 164 13 170 14.9 167.8"/>
 </g>
 <g fill="#78c878">
  <circle cx="8.4" cy="81.4" r="1.9"/><circle cx="14.9" cy="75.8" r="1.9"/>
  <circle cx="8.8" cy="89.8" r="1.7"/><circle cx="8.8" cy="93.4" r="1.7"/><circle cx="14.9" cy="89.8" r="1.7"/>
  <circle cx="15" cy="100.2" r="1.8"/><circle cx="8.8" cy="105.2" r="1.8"/>
  <circle cx="10.5" cy="122.4" r="2"/>
  <circle cx="12" cy="131.3" r="2"/>
  <circle cx="14.9" cy="140.2" r="1.7"/><circle cx="9.3" cy="145.6" r="2"/>
  <circle cx="9.2" cy="158.4" r="2"/>
  <circle cx="10" cy="164.8" r="1.8"/><circle cx="14.9" cy="167.8" r="1.9"/><circle cx="8.8" cy="170.8" r="1.9"/>
  <circle cx="11.4" cy="180.2" r="1.8"/>
 </g>
 <circle cx="14.4" cy="152.5" r="1.3" fill="#6ab0a0"/>
 <circle cx="9.9" cy="154" r="1" fill="#666"/><circle cx="9.3" cy="141.7" r="1" fill="#666"/>
 <!-- green blobs -->
 <rect x="8.6" y="194" width="6.8" height="6.3" rx="2.6" fill="#5cb85c"/><circle cx="12" cy="197" r="1.6" fill="#8ad88a"/>
 <rect x="8.6" y="205.3" width="6.8" height="7" rx="2.8" fill="#60c050"/><circle cx="12" cy="208.6" r="2" fill="#b4ec70"/>
 <rect x="8.6" y="216.5" width="6.8" height="7" rx="2.8" fill="#d8f0d8" stroke="#6ac06a" stroke-width="1.2"/>
 <rect x="8" y="229" width="7.6" height="8" fill="none" stroke="#777" stroke-width="0.8"/>
 <rect x="8.8" y="232.5" width="6" height="4" fill="#58c058"/>
 <path d="M8 242.5 C8 240 11 240 12 242 C13 240 16 241 15.5 244 L13 248.5 L9 247 Z" fill="none" stroke="#888" stroke-width="1"/>
 <path d="M8.5 254 H15 V261 H11 V258 H8.5 Z" fill="none" stroke="#888" stroke-width="1"/>
 <path d="M7.6 273.3 L11.5 270.6 Q12.3 270.2 13 270.6 L16.8 273 Q17.2 273.4 16.8 273.8 L13 276.3 Q12.3 276.7 11.5 276.3 L7.6 274 Q7.2 273.6 7.6 273.3 Z" fill="none" stroke="#6a6a6a" stroke-width="1.1"/>
 <rect x="8" y="281.5" width="8" height="8" fill="#b8b8b8"/><rect x="8" y="281.5" width="8" height="2" fill="#707070"/>
 <path d="M10.7 283.5 V289.5 M13.3 283.5 V289.5" stroke="#eee" stroke-width="0.6"/>
 <path d="M8.8 302 L12 293.5 L15.2 302 M10 299 H14" stroke="#555" stroke-width="1.3" fill="none"/>
 <path d="M8.8 312.5 L12 305.7 L15.2 312.5 M7.8 313.3 H16.2" stroke="#5a5a5a" stroke-width="1.2" fill="none"/>
 <!-- bottom group -->
 <rect x="7.8" y="331.5" width="5.5" height="5.5" fill="none" stroke="#888" stroke-width="0.9"/>
 <circle cx="14.8" cy="330" r="2.3" fill="none" stroke="#aaa" stroke-width="0.9"/>
 <rect x="7.8" y="349" width="5.5" height="5.5" fill="#5a8fdc"/>
 <circle cx="14.8" cy="347.5" r="2.3" fill="none" stroke="#bbb" stroke-width="0.9"/>
 <rect x="7.8" y="360" width="5.5" height="5.5" fill="#5a8fdc"/>
 <rect x="11.5" y="357.5" width="5" height="5" fill="none" stroke="#aaa" stroke-width="0.8"/>
 <rect x="10.8" y="369" width="5.5" height="5.5" fill="#5a8fdc"/>
 <rect x="7.2" y="372.5" width="5" height="5" fill="#fff" stroke="#999" stroke-width="0.8"/>
 <rect x="10.8" y="380" width="5.5" height="5.5" fill="#5a8fdc"/>
 <rect x="7.2" y="383.5" width="5" height="5" fill="#fff" stroke="#999" stroke-width="0.8"/>
 <rect x="6" y="393" width="12" height="0.8" fill="#d0d0d0"/>
</svg>

<!-- ===== right toolbar icons ===== -->
<svg style="left:0;top:0" width="755" height="404" viewBox="0 0 755 404">
 <rect x="742.5" y="64.5" width="12.5" height="5" fill="#dcdcdc"/>
 <g fill="#d0d0d0">
  <rect x="744" y="146" width="11" height="0.8"/><rect x="744" y="175.3" width="11" height="0.8"/><rect x="744" y="203.6" width="11" height="0.8"/><rect x="744" y="220.3" width="11" height="0.8"/>
  <rect x="744" y="236" width="11" height="0.8"/><rect x="744" y="314.2" width="11" height="0.8"/><rect x="744" y="342.5" width="11" height="0.8"/>
 </g>
 <g fill="#4a7fd0">
  <path d="M749.9 74 L748.3 76 H751.5 Z"/><path d="M749.9 82.6 L748.3 80.6 H751.5 Z"/>
  <path d="M745.6 78.3 L747.6 76.7 V79.9 Z"/><path d="M754.2 78.3 L752.2 76.7 V79.9 Z"/>
 </g>
 <rect x="745" y="86.5" width="4" height="2.5" fill="#666"/>
 <circle cx="751.5" cy="92" r="2.8" fill="#5a8fdc"/>
 <path d="M747.5 106.5 V101.5 C747.5 99 752.5 98.5 753.5 101" stroke="#a8b8d0" stroke-width="2.2" fill="none"/>
 <path d="M749 112 H752 L753 116 L750 118.5 L746 118 Z" fill="#b89a60"/><rect x="749.5" y="110" width="2" height="2.5" fill="#888"/>
 <path d="M746 131 L752.5 124" stroke="#555" stroke-width="1.6"/><circle cx="752.6" cy="130.2" r="1.7" fill="#42c042"/>
 <rect x="745" y="135.5" width="10" height="7" fill="#5a8fdc"/><rect x="746.5" y="138" width="5" height="3.5" fill="#eef3fb"/>
 <circle cx="750" cy="155.5" r="3.8" fill="none" stroke="#8080c0" stroke-width="1"/><circle cx="750" cy="152" r="1" fill="#4a7fd0"/>
 <path d="M753.5 165.5 A3.8 3.8 0 1 0 753.5 170" stroke="#8080c0" stroke-width="1" fill="none"/><circle cx="752" cy="167.8" r="1.3" fill="#4a7fd0"/>
 <path d="M745.5 188 L750 180 L754.5 188 Z" fill="#8a9ab8"/>
 <circle cx="750" cy="195" r="3.8" fill="#8aa0c8"/>
 <rect x="745.5" y="208.5" width="8" height="8" fill="#6a9ae0"/><path d="M745.5 212.5 H753.5 M749.5 208.5 V216.5" stroke="#dbe7f8" stroke-width="0.7"/><circle cx="754" cy="217" r="0.9" fill="#222"/>
 <path d="M745.5 225 H749.5 L750.5 226 H754 V232 H745.5 Z" fill="#8aaad8"/>
 <path d="M746 242 V249 M753 242 V249 M746 245.5 H753" stroke="#5a8fdc" stroke-width="1.2"/><rect x="747" y="243" width="5" height="5" fill="#8ab0e8"/>
 <path d="M745 258.5 H748 M749 261 L753.5 254" stroke="#666" stroke-width="0.9"/>
 <path d="M746 273 V268 H754 V273 M746 271 H754" stroke="#777" stroke-width="1" fill="none"/><rect x="748" y="266.5" width="4" height="2" fill="#5a8fdc"/>
 <path d="M746 283 V277.5 H754 V283 M746 281 H754" stroke="#777" stroke-width="1" fill="none"/><rect x="748" y="276" width="4" height="2" fill="#5a8fdc"/>
 <path d="M745 295 H747 M748.5 295 H750.5 M752 295 H754" stroke="#777" stroke-width="0.9"/>
 <path d="M745.5 300 V309 H754 L745.5 300" stroke="#5a8fdc" stroke-width="1" fill="#c8d8f0"/>
 <path d="M745.5 326 L753 317.5 M745.5 326 V321" stroke="#8a98c0" stroke-width="0.9" fill="none"/>
 <path d="M745.5 338 V333 C745.5 330.5 748 329 754 329" stroke="#8a98c0" stroke-width="0.9" fill="none"/>
 <path d="M745.5 355.5 L747 354 M748.5 352.5 L750 351 M751.5 349.5 L753 348" stroke="#777" stroke-width="1.1"/>
 <path d="M745.5 367.5 L747 366 M748.5 364.5 L750 363 M751.5 361.5 L753 360" stroke="#777" stroke-width="1.1"/>
 <rect x="745.5" y="376" width="7.5" height="7" fill="none" stroke="#999" stroke-width="0.9"/><path d="M750 383.5 L754.5 379" stroke="#e0903a" stroke-width="1.5"/>
 <path d="M745.5 396 V391 C745.5 389 747.5 388 752 388" stroke="#5a8fdc" stroke-width="1.2" fill="none"/><path d="M750 395.5 L754.5 391" stroke="#e0903a" stroke-width="1.5"/>
 <rect x="743.5" y="63" width="0.8" height="341" fill="#e4e4e4"/>
</svg>

<!-- ===== cursor arrow ===== -->
<svg style="left:720px;top:358px" width="10" height="13" viewBox="0 0 10 13"><path d="M1 0.8 V10.5 L3.5 8.2 L5.2 12 L6.8 11.3 L5.2 7.6 H8.5 Z" fill="#fff" stroke="#666" stroke-width="0.9"/></svg>

<!-- ===== cube overlay ===== -->
<div class="a" style="left:701px;top:373.5px;width:43px;height:31px;background:#fcfcfc"></div>
<div class="a" style="left:701.5px;top:400.5px;width:3px;height:4px;border-radius:1.5px 1.5px 0 0;background:#5a90e0"></div>
<div class="a" style="left:709px;top:401px;width:9px;height:3px;background:#d8d8d8"></div>
<div class="a" style="left:724.5px;top:400.5px;width:4px;height:4px;border-radius:2px 2px 0 0;border:1px solid #333;border-bottom:none"></div>
<svg style="left:0;top:0" width="755" height="404" viewBox="0 0 755 404">
 <path d="M713 383.5 L723.5 378 L734 383.5 L734 394.5 L723.5 400.3 L713 394.5 Z" fill="#5d60b2"/>
 <path d="M713 383.5 L723.5 378 L734 383.5 L723.5 389 Z" fill="#4cb8e4"/>
 <path d="M715.5 383.5 L723.5 379.3 L731.5 383.5 M723.5 379.3 L731.5 383.5" stroke="#d8f0fa" stroke-width="0.8" fill="none"/>
 <path d="M715.5 384 V393.5 L723.5 398 L731.5 393.5 V384" stroke="#e6e8f6" stroke-width="0.8" fill="none"/>
 <path d="M717 385 L723 382 L729.5 385 L723.5 388.3 Z" fill="#5cc4ec"/>
 <path d="M717 385 L723.5 388.3 V396 L717 392.5 Z" fill="#5a5cb0"/>
 <path d="M723.5 388.3 L729.5 385 V392.5 L723.5 396 Z" fill="#6e70bc"/>
 <path d="M717 385 L723.5 388.3 L729.5 385 M723.5 388.3 V396" stroke="#e8eaf8" stroke-width="0.6" fill="none"/>
</svg>

</div></body></html>
